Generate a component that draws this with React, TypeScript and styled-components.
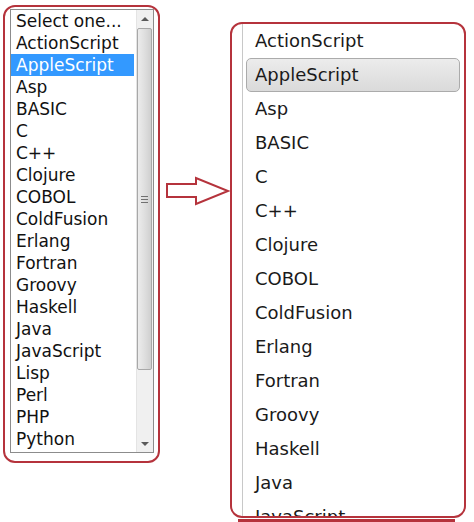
import React from "react";
import styled, { createGlobalStyle } from "styled-components";

const languages = [
  "ActionScript",
  "AppleScript",
  "Asp",
  "BASIC",
  "C",
  "C++",
  "Clojure",
  "COBOL",
  "ColdFusion",
  "Erlang",
  "Fortran",
  "Groovy",
  "Haskell",
  "Java",
  "JavaScript",
  "Lisp",
  "Perl",
  "PHP",
  "Python",
];

const selected = "AppleScript";

const App: React.FC = () => {
  return (
    <>
      <GlobalStyle />
      <Page>
        <LeftFrame>
          <ListBox>
            <Options>
              <Option>Select one...</Option>
              {languages.map((lang) => (
                <Option key={lang} $active={lang === selected}>
                  {lang}
                </Option>
              ))}
            </Options>
            <ScrollBar>
              <ScrollButton>
                <ArrowUp />
              </ScrollButton>
              <Track>
                <Thumb>
                  <Grip>
                    <span />
                    <span />
                    <span />
                  </Grip>
                </Thumb>
              </Track>
              <ScrollButton>
                <ArrowDown />
              </ScrollButton>
            </ScrollBar>
          </ListBox>
        </LeftFrame>

        <ArrowBox>
          <svg width="70" height="32" viewBox="0 0 70 32">
            <polygon
              points="7,8 36,8 36,2 68,15 36,28 36,21 7,21"
              fill="#fff"
              stroke="#b5333c"
              strokeWidth="2"
              strokeLinejoin="miter"
            />
          </svg>
        </ArrowBox>

        <RightColumn>
          <RightFrame>
            <DropList>
              {languages.map((lang) => (
                <DropItem key={lang} $active={lang === selected}>
                  {lang}
                </DropItem>
              ))}
            </DropList>
          </RightFrame>
          <BottomBar />
        </RightColumn>
      </Page>
    </>
  );
};

export default App;

// Styled components
const GlobalStyle = createGlobalStyle`
  html, body {
    margin: 0;
    padding: 0;
    background: #fff;
  }
  * {
    box-sizing: border-box;
  }
`;

const Page = styled.div`
  display: flex;
  align-items: flex-start;
  width: 474px;
  height: 522px;
  overflow: hidden;
  padding-left: 3px;
  font-family: "DejaVu Sans", Verdana, sans-serif;
  color: #111;
`;

const LeftFrame = styled.div`
  flex: none;
  width: 157px;
  height: 458px;
  margin-top: 5px;
  padding: 2px 0 0 5px;
  border: 2px solid #b5333c;
  border-radius: 12px;
`;

const ListBox = styled.div`
  display: flex;
  width: 144px;
  height: 444px;
  border: 1px solid #8c8c8c;
  background: #fff;
`;

const Options = styled.div`
  flex: 1;
  overflow: hidden;
`;

const Option = styled.div<{ $active?: boolean }>`
  height: 22px;
  line-height: 22px;
  padding-left: 5px;
  margin-right: 2px;
  font-size: 17px;
  white-space: nowrap;
  background: ${(p) => (p.$active ? "#3399ff" : "transparent")};
  color: ${(p) => (p.$active ? "#fff" : "#111")};
`;

const ScrollBar = styled.div`
  flex: none;
  width: 17px;
  display: flex;
  flex-direction: column;
  background: #f0f0f0;
  border-left: 1px solid #e4e4e4;
`;

const ScrollButton = styled.div`
  flex: none;
  height: 17px;
  display: flex;
  align-items: center;
  justify-content: center;
`;

const ArrowUp = styled.span`
  width: 0;
  height: 0;
  border-left: 4px solid transparent;
  border-right: 4px solid transparent;
  border-bottom: 4px solid #5a5a5a;
`;

const ArrowDown = styled.span`
  width: 0;
  height: 0;
  border-left: 4px solid transparent;
  border-right: 4px solid transparent;
  border-top: 4px solid #5a5a5a;
`;

const Track = styled.div`
  flex: 1;
  padding-top: 1px;
`;

const Thumb = styled.div`
  height: 342px;
  margin-right: 1px;
  border: 1px solid #a8a8a8;
  border-radius: 2px;
  background: linear-gradient(to right, #ececec, #dcdcdc 60%, #cfcfcf);
  display: flex;
  align-items: center;
  justify-content: center;
`;

const Grip = styled.div`
  display: flex;
  flex-direction: column;
  gap: 2px;
  span {
    display: block;
    width: 7px;
    height: 1px;
    background: #707070;
  }
`;

const ArrowBox = styled.div`
  flex: none;
  width: 70px;
  margin-top: 176px;
  svg {
    display: block;
  }
`;

const RightColumn = styled.div`
  flex: none;
  width: 236px;
  margin-top: 22px;
`;

const RightFrame = styled.div`
  height: 496px;
  border: 2px solid #b5333c;
  border-radius: 12px;
  overflow: hidden;
  background: #fff;
`;

const DropList = styled.div`
  height: 100%;
  margin-left: 10px;
  border-left: 1px solid #c8c8c8;
  padding-top: 0;
`;

const DropItem = styled.div<{ $active?: boolean }>`
  height: 34px;
  line-height: 32px;
  margin: 0 4px 0 3px;
  padding-left: 8px;
  font-size: 18px;
  white-space: nowrap;
  border: 1px solid ${(p) => (p.$active ? "#ababab" : "transparent")};
  border-radius: 5px;
  background: ${(p) =>
    p.$active ? "linear-gradient(to bottom, #ececec, #dadada)" : "transparent"};
  color: #1a1a1a;
`;

const BottomBar = styled.div`
  width: 217px;
  height: 4px;
  margin: 1px 0 0 8px;
  background: #b5333c;
`;
